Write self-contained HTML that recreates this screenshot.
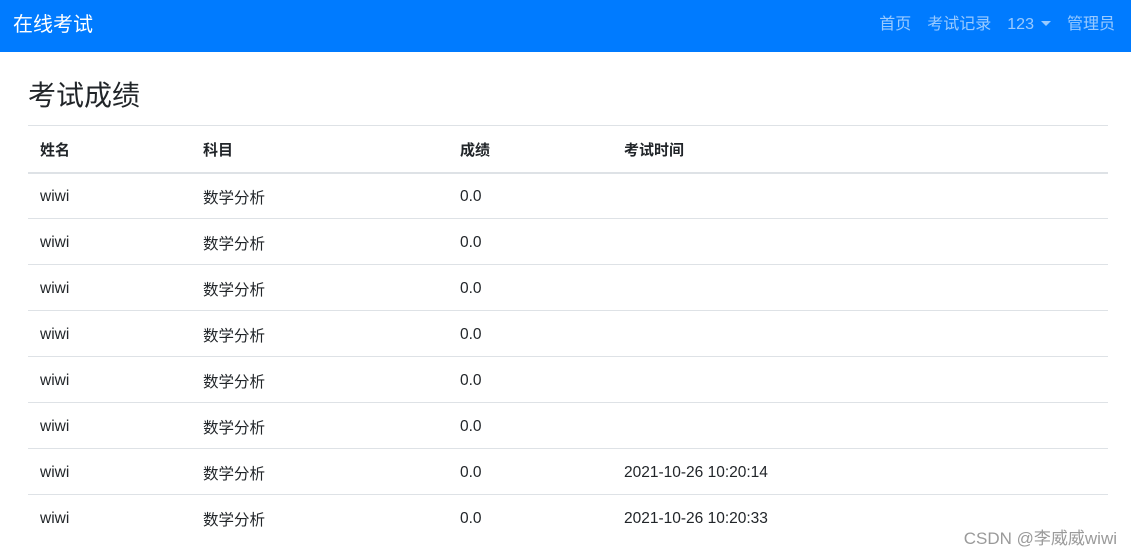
<!DOCTYPE html>
<html><head><meta charset="utf-8"><style>
*{margin:0;padding:0;box-sizing:border-box}
body{width:1131px;height:553px;overflow:hidden;background:#fff;font-family:"Liberation Sans","Noto Sans CJK SC",sans-serif;color:#212529;font-size:15px;position:relative}
.nav{height:52px;background:#007bff;position:relative}
.brand{position:absolute;left:13px;top:11px;color:#fff;font-size:20px;line-height:28px}
.links{position:absolute;right:16px;top:13px;font-size:16px;line-height:24px;color:rgba(255,255,255,.6)}
.links span{margin-left:16px}
.caret{display:inline-block;width:0;height:0;border-left:5px solid transparent;border-right:5px solid transparent;border-top:5px solid rgba(255,255,255,.6);vertical-align:3px;margin-left:7px}
h2{position:absolute;left:28px;top:78px;font-size:28px;font-weight:400;line-height:36px}
table{position:absolute;left:28px;top:125px;width:1080px;border-collapse:collapse}
td,th{height:46px;border-top:1px solid #dee2e6;text-align:left;padding:2px 12px 0;font-size:15px;vertical-align:middle}
td{font-size:15.5px}
th{font-weight:bold;border-bottom:2px solid #dee2e6;height:47px}
tr.first td{border-top:none}
.wm{position:absolute;right:14px;top:524px;font-size:17px;color:#9a9a9a}
</style></head><body>
<div class="nav"><div class="brand">在线考试</div>
<div class="links"><span>首页</span><span>考试记录</span><span>123<i class="caret"></i></span><span>管理员</span></div></div>
<h2>考试成绩</h2>
<table>
<colgroup><col style="width:163px"><col style="width:257px"><col style="width:164px"><col></colgroup>
<tr><th>姓名</th><th>科目</th><th>成绩</th><th>考试时间</th></tr>
<tr class="first"><td>wiwi</td><td>数学分析</td><td>0.0</td><td></td></tr>
<tr><td>wiwi</td><td>数学分析</td><td>0.0</td><td></td></tr>
<tr><td>wiwi</td><td>数学分析</td><td>0.0</td><td></td></tr>
<tr><td>wiwi</td><td>数学分析</td><td>0.0</td><td></td></tr>
<tr><td>wiwi</td><td>数学分析</td><td>0.0</td><td></td></tr>
<tr><td>wiwi</td><td>数学分析</td><td>0.0</td><td></td></tr>
<tr><td>wiwi</td><td>数学分析</td><td>0.0</td><td>2021-10-26 10:20:14</td></tr>
<tr><td>wiwi</td><td>数学分析</td><td>0.0</td><td>2021-10-26 10:20:33</td></tr>
</table>
<div class="wm">CSDN @李威威wiwi</div>
</body></html>
